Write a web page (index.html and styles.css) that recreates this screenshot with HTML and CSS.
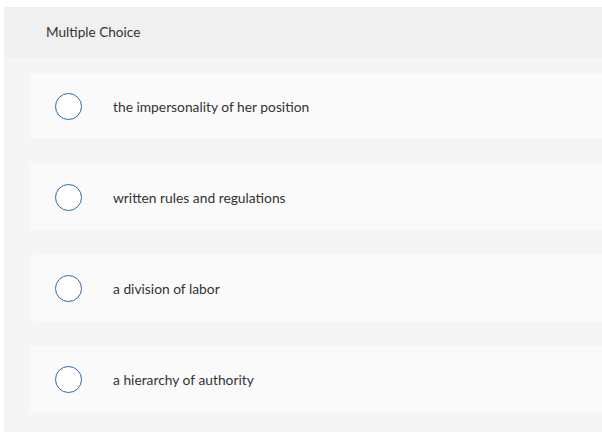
FILE: index.html
```html
<!DOCTYPE html>
<html>
<head>
<meta charset="utf-8">
<link rel="stylesheet" href="styles.css">
</head>
<body>
<div class="question">
  <div class="header">Multiple Choice</div>
  <div class="choices">
    <div class="choice"><span class="radio"></span><span class="label">the impersonality of her position</span></div>
    <div class="choice"><span class="radio"></span><span class="label">written rules and regulations</span></div>
    <div class="choice"><span class="radio"></span><span class="label">a division of labor</span></div>
    <div class="choice"><span class="radio"></span><span class="label">a hierarchy of authority</span></div>
  </div>
</div>
</body>
</html>
```
FILE: styles.css
```css
html, body {
  margin: 0;
  padding: 0;
  background: #ffffff;
}
body {
  padding: 7px 0 0 4px;
  font-family: Lato, "Open Sans", sans-serif;
  color: #333333;
  font-size: 13.8px;
}
.question {
  background: #f5f5f5;
  height: 425px;
}
.header {
  background: #f0f0f0;
  height: 50px;
  display: flex;
  align-items: center;
  padding-left: 42px;
  font-size: 13.6px;
  color: #333;
}
.choices {
  padding: 16px 0 0 26px;
  display: flex;
  flex-direction: column;
  gap: 25px;
}
.choice {
  background: #fafafa;
  height: 66px;
  border-radius: 3px 0 0 3px;
  display: flex;
  align-items: center;
  padding-left: 25px;
}
.radio {
  width: 25px;
  height: 25px;
  border: 1.2px solid #2c69a5;
  border-radius: 50%;
  background: #fff;
  flex: none;
}
.label {
  margin-left: 31px;
  font-size: 13.8px;
}
```
